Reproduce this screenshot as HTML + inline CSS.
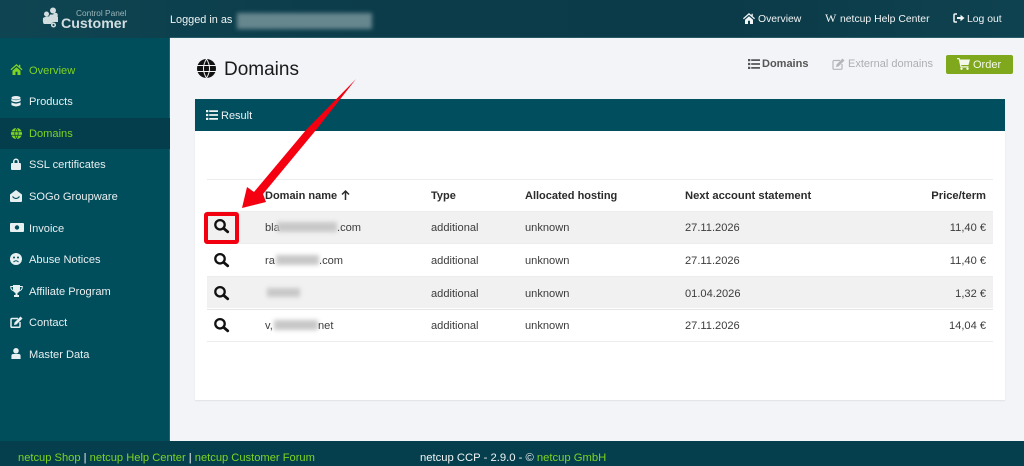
<!DOCTYPE html>
<html><head><meta charset="utf-8"><style>
html,body{margin:0;padding:0;width:1024px;height:466px;overflow:hidden;background:#004d5b;font-family:"Liberation Sans",sans-serif;font-size:11px;color:#333}
.a{position:absolute;white-space:nowrap}
svg.a{overflow:visible}
#top{left:0;top:0;width:1024px;height:38px;background:linear-gradient(90deg,#0f4552 0,#0c3d4b 30%,#0b3a48 70%,#0f4250 100%)}
#bot{left:0;top:441px;width:1024px;height:25px;background:#053f4d}
#main{left:170px;top:38px;width:854px;height:403px;background:#f2f4f8;box-shadow:0 0 1px #9fd0dc}
#panel{left:195px;top:99px;width:810px;height:301px;background:#fff;box-shadow:0 1px 1px #dfe1e5}
#ph{left:195px;top:99px;width:810px;height:32px;background:#014e5e}
.w{color:#f2f5f5}.g{color:#7fd321}
.s{left:29px;font-size:11.1px;line-height:14px;color:#e8eff0}
.n{font-size:10.4px;line-height:13px;top:13px;color:#f2f5f5}
.row{left:207px;width:786px;height:32px}
.line{left:207px;width:786px;height:1px;background:#ebeded}
.th{font-weight:bold;font-size:11px;top:190px;line-height:13px;color:#2b2b2b}
.td{line-height:13px;font-size:11.1px;color:#3c3c3c}
.bl{background:#c8c8c8;filter:blur(2px);height:10px}
.f{font-size:11.15px;line-height:13px;top:452px}
</style></head><body>
<div class="a" id="top"></div>
<div class="a" id="main"></div>
<div class="a" id="panel"></div>
<div class="a" id="ph"></div>
<div class="a" id="bot"></div>

<!-- logo -->
<svg class="a" style="left:41px;top:7px" width="22" height="23" viewBox="0 0 22 23" fill="#d2dde0">
<circle cx="12" cy="3.500" r="3"/><circle cx="5.500" cy="7" r="2.500"/><circle cx="14.500" cy="8" r="2.300"/>
<path d="M2 11Q5 9 8 9.500L9 7.500H15L17 10V15H12L10 17H3Q1.500 16 2 11Z"/>
<circle cx="12.500" cy="18" r="1.800" fill="#0e4250" stroke="#d2dde0" stroke-width="1.500"/></svg>
<div class="a" style="left:76px;top:9px;font-size:8.3px;line-height:9px;color:#9db5ba">Control Panel</div>
<div class="a" style="left:61px;top:16px;font-size:14.2px;line-height:16px;font-weight:bold;color:#d2dde0">Customer</div>

<div class="a w" style="left:170px;top:14px;line-height:13px;font-size:10.9px">Logged in as</div>
<div class="a" style="left:237px;top:13px;width:135px;height:16px;background:#67878f;filter:blur(2px)"></div>

<!-- top right nav -->
<svg class="a" style="left:743px;top:13px" width="12" height="11" viewBox="0 0 12 11" fill="#f2f5f5"><path d="M6 0 0 5.300.8 6.200 6 1.700l5.200 4.500.8-.9L9.800 3.400V.8H8.500v1.500zM2 6.800V11h3V7.800h2V11h3V6.800L6 3.200z"/></svg>
<div class="a n" style="left:758px">Overview</div>
<div class="a w" style="left:825px;top:12px;line-height:13px;font-family:'Liberation Serif',serif;font-size:12px">W</div>
<div class="a n" style="left:840px">netcup Help Center</div>
<svg class="a" style="left:953px;top:13px" width="12" height="11" viewBox="0 0 12 11" fill="none" stroke="#f2f5f5"><path d="M4 1H2Q1 1 1 2v6q0 1 1 1h2" stroke-width="1.500"/><path d="M4 4h3.500V1.800L11.500 5 7.500 8.200V6H4z" fill="#f2f5f5" stroke="none"/></svg>
<div class="a n" style="left:967px">Log out</div>

<!-- sidebar -->
<div class="a" style="left:0;top:118px;width:170px;height:31px;background:#043e4c"></div>
<svg class="a" style="left:10px;top:64px" width="13" height="11" viewBox="0 0 12 11" fill="#7fd321"><path d="M6 0 0 5.300.8 6.200 6 1.700l5.200 4.500.8-.9L9.800 3.400V.8H8.500v1.500zM2 6.800V11h3V7.800h2V11h3V6.800L6 3.200z"/></svg>
<div class="a s" style="top:64px;color:#7fd321">Overview</div>
<svg class="a" style="left:11px;top:96px" width="10" height="11" viewBox="0 0 10 12" fill="#e8eff0"><ellipse cx="5" cy="2" rx="5" ry="2"/><path d="M0 3.200Q5 6 10 3.200V5.500Q5 8 0 5.500zM0 7Q5 9.500 10 7v3Q5 13 0 10z"/></svg>
<div class="a s" style="top:95px">Products</div>
<svg class="a" style="left:11px;top:127.500px" width="11" height="11" viewBox="0 0 22 22"><circle cx="11" cy="11" r="11" fill="#7fd321"/><path d="M0 7.500h22M0 14.500h22M11 0Q4 11 11 22Q18 11 11 0" fill="none" stroke="#043e4c" stroke-width="1.400"/></svg>
<div class="a s" style="top:127px;color:#7fd321">Domains</div>
<svg class="a" style="left:11px;top:158px" width="10" height="12" viewBox="0 0 10 12" fill="#e8eff0"><path d="M2 5V3.500a3 3 0 0 1 6 0V5h1q1 0 1 1v5q0 1-1 1H1q-1 0-1-1V6q0-1 1-1zm1.500 0h3V3.500a1.500 1.500 0 0 0-3 0z"/></svg>
<div class="a s" style="top:158px">SSL certificates</div>
<svg class="a" style="left:10px;top:190px" width="12" height="12" viewBox="0 0 12 12" fill="#e8eff0"><path d="M6 0 12 4.500V11q0 1-1 1H1q-1 0-1-1V4.500z"/><path d="M2.500 6.500Q6 10.500 9.500 6.500" fill="none" stroke="#004e5c"/></svg>
<div class="a s" style="top:190px">SOGo Groupware</div>
<svg class="a" style="left:10px;top:223px" width="14" height="9" viewBox="0 0 14 9"><rect width="14" height="9" rx="1" fill="#e8eff0"/><circle cx="7" cy="4.500" r="2.200" fill="#004e5c"/></svg>
<div class="a s" style="top:222px">Invoice</div>
<svg class="a" style="left:10px;top:253px" width="12" height="12" viewBox="0 0 12 12"><circle cx="6" cy="6" r="6" fill="#e8eff0"/><circle cx="4" cy="4.500" r="1" fill="#004e5c"/><circle cx="8" cy="4.500" r="1" fill="#004e5c"/><path d="M3.500 9Q6 6.500 8.500 9" fill="none" stroke="#004e5c"/></svg>
<div class="a s" style="top:253px">Abuse Notices</div>
<svg class="a" style="left:10px;top:285px" width="13" height="12" viewBox="0 0 13 12" fill="#e8eff0"><path d="M3 0h7v4q0 3-2.500 4v2H9v2H4v-2h1.500V8Q3 7 3 4z"/><path d="M3 1.500H.7q0 3.500 3 4.500M10 1.500h2.300q0 3.500-3 4.500" fill="none" stroke="#e8eff0"/></svg>
<div class="a s" style="top:285px">Affiliate Program</div>
<svg class="a" style="left:10px;top:316px" width="13" height="12" viewBox="0 0 13 12"><path d="M8 2.500H2Q1 2.500 1 3.500v7q0 .8 1 .8h7q1 0 1-1V6" fill="none" stroke="#e8eff0" stroke-width="1.500"/><path d="M4.500 6.500 10.500.5l2 2-6 6-2.500.5z" fill="#e8eff0"/></svg>
<div class="a s" style="top:316px">Contact</div>
<svg class="a" style="left:11px;top:348px" width="10" height="11" viewBox="0 0 10 12" fill="#e8eff0"><circle cx="5" cy="3" r="3"/><path d="M0 12V8.500Q0 6.500 2 6.500H8Q10 6.500 10 8.500V12z"/></svg>
<div class="a s" style="top:348px">Master Data</div>

<!-- title -->
<svg class="a" style="left:197px;top:59px" width="19" height="19" viewBox="0 0 22 22"><circle cx="11" cy="11" r="11" fill="#111"/><path d="M0 7.500h22M0 14.500h22M11 0Q4 11 11 22Q18 11 11 0" fill="none" stroke="#f2f4f8" stroke-width="1.100"/></svg>
<div class="a" style="left:224px;top:58px;font-size:19px;line-height:23px;color:#1a1a1a">Domains</div>

<!-- tabs -->
<svg class="a" style="left:748px;top:59px" width="12" height="10" viewBox="0 0 12 10" fill="#555"><path d="M0 0h2.300v2.200H0zM3.200 .2h8.800v1.800H3.200zM0 3.900h2.300v2.200H0zM3.200 4.100h8.800v1.800H3.200zM0 7.800h2.300V10H0zM3.200 8h8.800v1.800H3.200z"/></svg>
<div class="a" style="left:762px;top:58px;line-height:13px;font-weight:bold;color:#555">Domains</div>
<svg class="a" style="left:832px;top:58px" width="13" height="12" viewBox="0 0 13 12"><path d="M8 2.500H2Q1 2.500 1 3.500v7q0 .8 1 .8h7q1 0 1-1V6" fill="none" stroke="#b4b6b8" stroke-width="1.200"/><path d="M4.500 6.500 10.500.5l2 2-6 6-2.500.5z" fill="#b4b6b8"/></svg>
<div class="a" style="left:848px;top:58px;line-height:13px;color:#acaeb0">External domains</div>
<div class="a" style="left:946px;top:55px;width:67px;height:19px;background:#7fa81c;border-radius:2px"></div>
<svg class="a" style="left:957px;top:58px" width="13" height="12" viewBox="0 0 13 12" fill="#f4f8ea"><path d="M0 0h2.500l.5 1.500h10L11.500 7H4.200l.3 1.300H11.500V9.500H3.500L1.700 1.200H0z"/><circle cx="4.500" cy="10.800" r="1.200"/><circle cx="10.500" cy="10.800" r="1.200"/></svg>
<div class="a" style="left:973px;top:59px;line-height:13px;color:#f4f8ea">Order</div>

<!-- panel head -->
<svg class="a" style="left:206px;top:110px" width="12" height="10" viewBox="0 0 12 10" fill="#eef3f4"><path d="M0 0h2.300v2.200H0zM3.200 .2h8.800v1.800H3.200zM0 3.900h2.300v2.200H0zM3.200 4.100h8.800v1.800H3.200zM0 7.800h2.300V10H0zM3.200 8h8.800v1.800H3.200z"/></svg>
<div class="a" style="left:221px;top:110px;line-height:13px;color:#eef3f4">Result</div>

<!-- table -->
<div class="a row" style="top:211px;background:#f1f1f1"></div>
<div class="a row" style="top:276px;background:#f1f1f1"></div>
<div class="a line" style="top:179px"></div>
<div class="a line" style="top:211px"></div>
<div class="a line" style="top:243px"></div>
<div class="a line" style="top:276px"></div>
<div class="a line" style="top:309px;background:#e4e6e6"></div>
<div class="a line" style="top:341px"></div>

<div class="a th" style="left:265px">Domain name</div>
<svg class="a" style="left:341px;top:190px" width="9" height="10" viewBox="0 0 9 10" fill="none" stroke="#2b2b2b" stroke-width="1.500"><path d="M4.500 10V1M1 4.500 4.500 1 8 4.500"/></svg>
<div class="a th" style="left:431px">Type</div>
<div class="a th" style="left:525px">Allocated hosting</div>
<div class="a th" style="left:685px;font-size:11.2px">Next account statement</div>
<div class="a th" style="right:38px;font-size:11.2px">Price/term</div>

<!-- rows -->
<div class="a td" style="left:265px;top:222px">bla</div>
<div class="a bl" style="left:277px;top:222px;width:60px"></div>
<div class="a td" style="left:337px;top:222px">.com</div>
<div class="a td" style="left:431px;top:222px">additional</div>
<div class="a td" style="left:525px;top:222px">unknown</div>
<div class="a td" style="left:685px;top:222px">27.11.2026</div>
<div class="a td" style="right:38px;top:222px">11,40 €</div>

<div class="a td" style="left:265px;top:255px">ra</div>
<div class="a bl" style="left:276px;top:255px;width:43px"></div>
<div class="a td" style="left:319px;top:255px">.com</div>
<div class="a td" style="left:431px;top:255px">additional</div>
<div class="a td" style="left:525px;top:255px">unknown</div>
<div class="a td" style="left:685px;top:255px">27.11.2026</div>
<div class="a td" style="right:38px;top:255px">11,40 €</div>

<div class="a bl" style="left:267px;top:288px;width:33px;height:9px"></div>
<div class="a td" style="left:431px;top:288px">additional</div>
<div class="a td" style="left:525px;top:288px">unknown</div>
<div class="a td" style="left:685px;top:288px">01.04.2026</div>
<div class="a td" style="right:38px;top:288px">1,32 €</div>

<div class="a td" style="left:265px;top:320px">v,</div>
<div class="a bl" style="left:274px;top:320px;width:44px"></div>
<div class="a td" style="left:318px;top:320px">net</div>
<div class="a td" style="left:431px;top:320px">additional</div>
<div class="a td" style="left:525px;top:320px">unknown</div>
<div class="a td" style="left:685px;top:320px">27.11.2026</div>
<div class="a td" style="right:38px;top:320px">14,04 €</div>

<!-- magnifiers -->
<svg class="a" style="left:214px;top:219px" width="15" height="14" viewBox="0 0 15 14" fill="none" stroke="#111" stroke-width="2.300"><circle cx="6" cy="5.800" r="4.700"/><path d="M9.600 9.300 13.700 12.800" stroke-width="2.800" stroke-linecap="round"/></svg>
<svg class="a" style="left:214px;top:253px" width="15" height="14" viewBox="0 0 15 14" fill="none" stroke="#111" stroke-width="2.300"><circle cx="6" cy="5.800" r="4.700"/><path d="M9.600 9.300 13.700 12.800" stroke-width="2.800" stroke-linecap="round"/></svg>
<svg class="a" style="left:214px;top:286px" width="15" height="14" viewBox="0 0 15 14" fill="none" stroke="#111" stroke-width="2.300"><circle cx="6" cy="5.800" r="4.700"/><path d="M9.600 9.300 13.700 12.800" stroke-width="2.800" stroke-linecap="round"/></svg>
<svg class="a" style="left:214px;top:318px" width="15" height="14" viewBox="0 0 15 14" fill="none" stroke="#111" stroke-width="2.300"><circle cx="6" cy="5.800" r="4.700"/><path d="M9.600 9.300 13.700 12.800" stroke-width="2.800" stroke-linecap="round"/></svg>

<!-- red annotations -->
<div class="a" style="left:204px;top:212px;width:27px;height:24px;border:4px solid #f2000f;border-radius:3px"></div>
<svg class="a" style="left:0;top:0" width="1024" height="466"><path d="M356 79 316 130 263 194 266 202 242 208 247 187 254 192 306 130Z" fill="#f50010"/></svg>

<!-- footer -->
<div class="a g f" style="left:18px">netcup Shop <span class="w">|</span> netcup Help Center <span class="w">|</span> netcup Customer Forum</div>
<div class="a w f" style="left:420px;font-size:11.25px">netcup CCP - 2.9.0 - © <span class="g">netcup GmbH</span></div>
</body></html>
